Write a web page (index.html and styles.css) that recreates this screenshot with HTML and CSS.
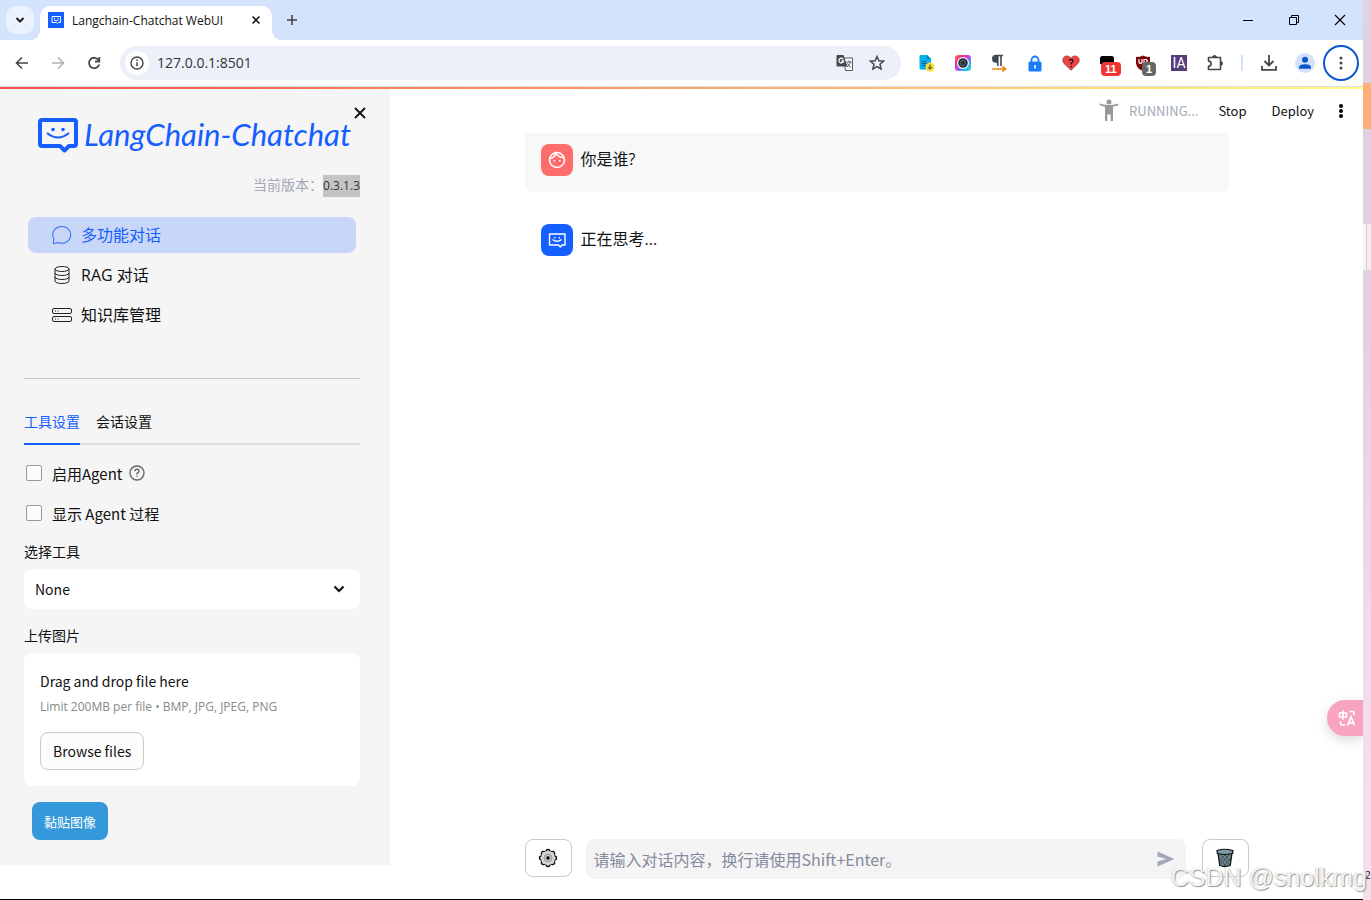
FILE: index.html
```html
<!DOCTYPE html>
<html lang="zh-CN">
<head>
    <meta charset="UTF-8">
    <meta name="viewport" content="width=device-width, initial-scale=1.0">
    <title>Langchain-Chatchat WebUI</title>
    <link rel="stylesheet" href="styles.css">
</head>
<body>

    <div class="browser">
        <div class="tab-strip">
            <button class="tab-search" aria-label="Search tabs">
                <svg width="10" height="10" viewBox="0 0 10 10"><path d="M1.5 3l3.5 3.5L8.500 3" fill="none" stroke="#1f2023" stroke-width="2"/></svg>
            </button>
            <div class="tab">
                <svg class="favicon" width="16" height="16" viewBox="0 0 16 16">
                    <rect width="16" height="16" fill="#155eff"/>
                    <path d="M4 4.500h8.500v6h-2l-1 1-1-1H4z" fill="none" stroke="#fff"/>
                    <path d="M6 8q2.200 1.500 4.500 0" fill="none" stroke="#fff"/>
                    <path d="M6 6.500h1M9.500 6.500h1" stroke="#fff"/>
                </svg>
                <span class="tab-title">Langchain-Chatchat WebUI</span>
                <button class="tab-close" aria-label="Close tab">
                    <svg width="10" height="10" viewBox="0 0 10 10"><path d="M1.500 1.500l7 7M8.500 1.500l-7 7" stroke="#1f2023" stroke-width="1.600"/></svg>
                </button>
            </div>
            <button class="new-tab" aria-label="New tab">
                <svg width="12" height="12" viewBox="0 0 12 12"><path d="M6 1v10M1 6h10" stroke="#41444a" stroke-width="1.600"/></svg>
            </button>
            <div class="window-buttons">
                <button aria-label="Minimize"><svg width="12" height="12" viewBox="0 0 12 12"><path d="M1 6.500h10" stroke="#000"/></svg></button>
                <button aria-label="Restore"><svg width="12" height="12" viewBox="0 0 12 12"><path d="M1.500 3.500h7v7h-7zM3.500 3V1.500h7v7H9" fill="none" stroke="#000"/></svg></button>
                <button aria-label="Close"><svg width="12" height="12" viewBox="0 0 12 12"><path d="M1 1l10 10M11 1L1 11" stroke="#000" stroke-width="1.100"/></svg></button>
            </div>
        </div>

        <div class="toolbar">
            <button class="tool" aria-label="Back"><svg width="14" height="14" viewBox="0 0 14 14"><path d="M13 7H2M7 1.500L1.500 7 7 12.500" fill="none" stroke="#45474b" stroke-width="1.600"/></svg></button>
            <button class="tool" aria-label="Forward"><svg width="14" height="14" viewBox="0 0 14 14"><path d="M1 7h11M7 1.500L12.500 7 7 12.500" fill="none" stroke="#b0b1b3" stroke-width="1.600"/></svg></button>
            <button class="tool" aria-label="Reload"><svg width="14" height="14" viewBox="0 0 14 14"><path d="M11.500 4A5.200 5.200 0 1 0 12.200 8.500M12.300 1v4.500H8" fill="none" stroke="#45474b" stroke-width="1.800"/></svg></button>
            <div class="omnibox">
                <button class="site-info" aria-label="Site information"><svg width="14" height="14" viewBox="0 0 14 14"><circle cx="7" cy="7" r="6" fill="none" stroke="#45474b" stroke-width="1.400"/><path d="M7 6.200v4M7 3.500v1.500" stroke="#45474b" stroke-width="1.500"/></svg></button>
                <input class="url" type="text" value="127.0.0.1:8501" aria-label="Address">
                <button class="omni-icon" aria-label="Translate page">
                    <svg width="18" height="18" viewBox="0 0 18 18">
                        <path d="M7.500 4h9v12.500H9.500z" fill="#fff" stroke="#55575b"/>
                        <path d="M1.500 1h6l4 11.500h-10a1 1 0 0 1-1-1V2a1 1 0 0 1 1-1z" fill="#45474b"/>
                        <path d="M7.200 5.300A2.300 2.300 0 1 0 7.500 7H5.500" fill="none" stroke="#fff" stroke-width="1.300"/>
                        <path d="M10.500 8h5M13 6.500V8M14.500 8q-.5 3-3.500 5M11.500 9.500q1 2.500 3.500 4" fill="none" stroke="#55575b"/>
                    </svg>
                </button>
                <button class="omni-icon" aria-label="Bookmark">
                    <svg width="16" height="16" viewBox="0 0 16 16"><path d="M8 1.500l1.900 4.300 4.700.4-3.600 3.100 1.100 4.600L8 11.500l-4.100 2.400L5 9.300 1.400 6.200l4.700-.4z" fill="none" stroke="#45474b" stroke-width="1.500"/></svg>
                </button>
            </div>
            <button class="tool" aria-label="Document download">
                <svg width="18" height="18" viewBox="0 0 18 18"><path d="M2 1h7l4 4v10.500H3a1.500 1.500 0 0 1-1.500-1.500V2z" fill="#02b0ec"/><path d="M9 1v4h4z" fill="#087cc0"/><path d="M4 7.500h4M4 9.500h6M4 11.500h4" stroke="#125b8b"/><circle cx="12" cy="13" r="4.500" fill="#fddb3a"/><path d="M12 10.500v4.500M10 13.200l2 2 2-2" fill="none" stroke="#333"/></svg>
            </button>
            <button class="tool" aria-label="Camera">
                <svg width="16" height="16" viewBox="0 0 16 16">
                    <defs><linearGradient id="cam" x1="0" y1="0" x2="1" y2="1"><stop offset="0" stop-color="#ff8a1e"/><stop offset=".25" stop-color="#f22c8f"/><stop offset=".5" stop-color="#c048ee"/><stop offset=".75" stop-color="#20b8ff"/><stop offset="1" stop-color="#45e0a0"/></linearGradient></defs>
                    <rect width="16" height="16" rx="3" fill="url(#cam)"/><circle cx="8" cy="8" r="6" fill="#fff"/><circle cx="8" cy="8" r="4.800" fill="#28333c"/><circle cx="8" cy="8" r="2.600" fill="none" stroke="#54616b"/>
                </svg>
            </button>
            <button class="tool" aria-label="Paragraph marks">
                <svg width="16" height="18" viewBox="0 0 16 18"><path d="M12 1.500H5a3.200 3.200 0 0 0 0 6.400h1M6.800 1.500V12M10 1.500V12" fill="none" stroke="#3b4a55" stroke-width="1.600"/><path d="M5 2a3 3 0 0 0 0 6h1.500V2z" fill="#3b4a55"/><path d="M1 15h12M11.500 12.500l3 2.500-3 2.500" fill="none" stroke="#f58613" stroke-width="1.700"/></svg>
            </button>
            <button class="tool" aria-label="Password lock">
                <svg width="14" height="17" viewBox="0 0 14 17"><path d="M3.500 8V5a3.500 3.500 0 0 1 7 0v3" fill="none" stroke="#177cff" stroke-width="1.800"/><rect x=".5" y="6.500" width="13" height="10" rx="1.500" fill="#177cff"/><path d="M7 10v3.500" stroke="#fff" stroke-width="1.600"/></svg>
            </button>
            <button class="tool" aria-label="Heart">
                <svg width="18" height="16" viewBox="0 0 18 16"><path d="M9 15.300L2 8.500C-.5 5.500 1 1 5 1c2 0 3.200 1 4 2.300C9.800 2 11 1 13 1c4 0 5.500 4.500 3 7.500z" fill="#f04343" stroke="#943434" stroke-width=".7"/><path d="M7.300 5.800Q7.500 4.300 9.200 4.300 11 4.300 11 5.900 11 7 9.200 8.200V9.500M9.200 11v1.400" fill="none" stroke="#161616" stroke-width="1.300"/></svg>
            </button>
            <button class="tool" aria-label="Tab manager">
                <svg width="16" height="16" viewBox="0 0 16 16"><path d="M1 3.500A2.500 2.500 0 0 1 3.500 1h9A2.500 2.500 0 0 1 15 3.500V9H5v2H3V9H1z" fill="#000"/></svg>
                <span class="badge badge-red">11</span>
            </button>
            <button class="tool" aria-label="Content blocker">
                <svg width="16" height="16" viewBox="0 0 16 16"><path d="M8 .5q3 1.500 7 1.500v6q0 5-7 8-7-3-7-8V2q4 0 7-1.500z" fill="#7c0406"/><path d="M4 4v3.500q1.500 1.800 3 0V4M9 9V4.500h2.500q1.500 1.500 0 3H9" fill="none" stroke="#fff" stroke-width="1.200"/></svg>
                <span class="badge badge-gray">1</span>
            </button>
            <button class="tool" aria-label="IA"><span class="ia">IA</span></button>
            <button class="tool" aria-label="Extensions">
                <svg width="18" height="18" viewBox="0 0 18 18"><path d="M2.500 3.500h12v12h-12v-3.200a2.500 2.500 0 0 0 0-5.200z" fill="none" stroke="#45474b" stroke-width="1.600" stroke-linejoin="round"/><path d="M6.500 3.500a2 2 0 0 1 4 0M14.500 7.500a2 2 0 0 1 0 4" fill="#45474b" stroke="#45474b"/></svg>
            </button>
            <span class="separator"></span>
            <button class="tool" aria-label="Downloads">
                <svg width="16" height="16" viewBox="0 0 16 16"><path d="M8 0v10M3.500 6L8 10.500 12.500 6M1 11v3.800h14V11" fill="none" stroke="#45474b" stroke-width="1.800"/></svg>
            </button>
            <button class="tool" aria-label="Profile">
                <svg width="20" height="20" viewBox="0 0 20 20"><circle cx="10" cy="10" r="10" fill="#d3e3fd"/><circle cx="10" cy="6.800" r="3" fill="#0b57d0"/><path d="M4 15.800v-1.500Q4 11.300 10 11.300t6 3v1.500z" fill="#0b57d0"/></svg>
            </button>
            <button class="tool ringed" aria-label="Browser menu">
                <svg width="4" height="16" viewBox="0 0 4 16"><g fill="#45474b"><circle cx="2" cy="3" r="1.500"/><circle cx="2" cy="8" r="1.500"/><circle cx="2" cy="13" r="1.500"/></g></svg>
            </button>
        </div>

        <div class="decoration"></div>

        <div class="app">
            <aside class="sidebar">
                <button class="sidebar-close" aria-label="Close sidebar">
                    <svg width="12" height="12" viewBox="0 0 12 12"><path d="M1 1l10 10M11 1L1 11" stroke="#111" stroke-width="1.800"/></svg>
                </button>
                <div class="logo">
                    <svg width="40" height="36" viewBox="0 0 40 36">
                        <path d="M4 3h32q2 0 2 2v22q0 2-2 2h-5l-4.500 4.500L22 29H4q-2 0-2-2V5q0-2 2-2z" fill="none" stroke="#155eff" stroke-width="4" stroke-linejoin="round"/>
                        <path d="M9 16q11 9 22 0" fill="none" stroke="#155eff" stroke-width="2"/>
                        <circle cx="15" cy="12.500" r="1.800" fill="#155eff"/><circle cx="25" cy="12.500" r="1.800" fill="#155eff"/>
                    </svg>
                    <span>LangChain-Chatchat</span>
                </div>
                <p class="version">当前版本：<mark>0.3.1.3</mark></p>

                <nav class="menu">
                    <a class="active" href="#">
                        <svg width="20" height="20" viewBox="0 0 20 20"><path d="M1.300 18.700l.6-4.700A9 8.400 0 1 1 6 17.500z" fill="none" stroke="#3c70f6" stroke-width="1.100" stroke-linejoin="round"/></svg>
                        <span>多功能对话</span>
                    </a>
                    <a href="#">
                        <svg width="20" height="20" viewBox="0 0 20 20" fill="none" stroke="#222"><ellipse cx="10" cy="4" rx="7" ry="2.500"/><path d="M3 4v12c0 3.300 14 3.300 14 0V4M3 8c0 3.300 14 3.300 14 0M3 12c0 3.300 14 3.300 14 0"/></svg>
                        <span>RAG 对话</span>
                    </a>
                    <a href="#">
                        <svg width="20" height="20" viewBox="0 0 20 20" fill="none" stroke="#222"><rect x=".5" y="3.500" width="19" height="5" rx="1.500"/><rect x=".5" y="11.500" width="19" height="5" rx="1.500"/><path d="M3 6h1M5.500 6h1M3 14h1M5.500 14h1"/></svg>
                        <span>知识库管理</span>
                    </a>
                </nav>

                <hr>

                <div class="tabs" role="tablist">
                    <button class="selected" role="tab" aria-selected="true">工具设置</button>
                    <button role="tab" aria-selected="false">会话设置</button>
                </div>

                <div class="check-row">
                    <input type="checkbox" id="useAgent">
                    <label for="useAgent">启用Agent</label>
                    <svg width="16" height="16" viewBox="0 0 16 16" fill="none" stroke="#666" stroke-width="1.400"><circle cx="8" cy="8" r="7"/><path d="M5.900 6.300Q6 4.300 8 4.300t2.100 1.900Q10.100 7.200 8 8.400v1.100M8 10.700v1.400"/></svg>
                </div>
                <div class="check-row">
                    <input type="checkbox" id="showAgent">
                    <label for="showAgent">显示 Agent 过程</label>
                </div>

                <label class="field-label" for="tool">选择工具</label>
                <div class="select-wrap">
                    <select id="tool">
                        <option>None</option>
                    </select>
                    <svg width="12" height="8" viewBox="0 0 12 8"><path d="M1.500 1.500L6 6l4.500-4.500" fill="none" stroke="#111" stroke-width="2.200"/></svg>
                </div>

                <span class="field-label">上传图片</span>
                <div class="uploader">
                    <p class="drag">Drag and drop file here</p>
                    <p class="limit">Limit 200MB per file • BMP, JPG, JPEG, PNG</p>
                    <button class="btn">Browse files</button>
                </div>
                <button class="paste-btn">黏贴图像</button>
            </aside>

            <main class="main">
                <header class="app-header">
                    <svg width="20" height="24" viewBox="0 0 20 24" fill="#999"><circle cx="10" cy="3" r="2.500"/><path d="M.5 6.200l.4-1.700Q10 7.500 19.100 4.500l.4 1.700-5.500 1.600V22h-2.300v-6.500H8.300V22H6V7.800z"/></svg>
                    <span class="running">RUNNING...</span>
                    <button>Stop</button>
                    <button>Deploy</button>
                    <button class="more" aria-label="Main menu">
                        <svg width="4" height="16" viewBox="0 0 4 16"><circle cx="2" cy="3" r="2"/><circle cx="2" cy="8" r="2"/><circle cx="2" cy="13" r="2"/></svg>
                    </button>
                </header>

                <section class="chat">
                    <div class="message user">
                        <span class="avatar">
                            <svg width="20" height="20" viewBox="0 0 20 20" fill="none" stroke="#fff" stroke-width="1.600"><circle cx="10" cy="10" r="7.500"/><path d="M3 8.500Q7.500 8 9 3q2.500 4.800 8 4.500"/><path d="M6.500 10.800h1.600M12 10.800h1.600"/></svg>
                        </span>
                        <p>你是谁?</p>
                    </div>
                    <div class="message">
                        <span class="avatar">
                            <svg width="20" height="20" viewBox="0 0 20 20" fill="none" stroke="#fff" stroke-width="1.400"><path d="M2.500 4h15.500v11h-3l-1.700 2-1.800-2h-9z" stroke-linejoin="round"/><path d="M5.500 9.500q4.500 3.500 9 0"/><path d="M7.300 7.700h1.200M11.800 7.700H13"/></svg>
                        </span>
                        <p>正在思考...</p>
                    </div>
                </section>

                <form class="composer">
                    <button class="btn" type="button" aria-label="Settings">
                        <svg width="20" height="20" viewBox="0 0 20 20">
                            <g fill="#d4d4d4" stroke="#111" stroke-width="1.400"><circle cx="10" cy="3.500" r="2"/><circle cx="14.600" cy="5.400" r="2"/><circle cx="16.500" cy="10" r="2"/><circle cx="14.600" cy="14.600" r="2"/><circle cx="10" cy="16.500" r="2"/><circle cx="5.400" cy="14.600" r="2"/><circle cx="3.500" cy="10" r="2"/><circle cx="5.400" cy="5.400" r="2"/></g>
                            <circle cx="10" cy="10" r="7" fill="#d8d8d8"/><circle cx="10" cy="10" r="4" fill="#c4c4c4" stroke="#999"/><circle cx="10" cy="10" r="1.800" fill="#000"/>
                        </svg>
                    </button>
                    <div class="prompt">
                        <input type="text" placeholder="请输入对话内容，换行请使用Shift+Enter。" aria-label="对话内容">
                        <button type="button" aria-label="Send">
                            <svg width="18" height="16" viewBox="0 0 18 16"><path d="M.5.5L17.500 8 .5 15.500v-5L9 8 .5 5.500z" fill="#a3a8b8"/></svg>
                        </button>
                    </div>
                    <button class="btn" type="button" aria-label="Clear">
                        <svg width="18" height="20" viewBox="0 0 18 20"><path d="M2 5l1.800 12.500Q9 19.500 14.200 17.500L16 5z" fill="#6f858c" stroke="#111" stroke-width="1.300"/><path d="M4 6l9.500 11M8 6l6 7M4 11l6 7M14 6L4.500 16M10 6l-6 6M15 10l-7 8" stroke="#30444b" stroke-width=".7"/><path d="M1 2.500Q9 0 17 2.500l-.4 3Q9 7.500 1.400 5.500z" fill="#7f979e" stroke="#111" stroke-width="1.200"/></svg>
                    </button>
                </form>
            </main>
        </div>

        <button class="translate-bubble" aria-label="Translate">
            <svg width="18" height="18" viewBox="0 0 18 18" fill="none" stroke="#fff" stroke-width="1.700"><path d="M1.500 4h7v4h-7zM5 1.500v9M11.500 2.500h3q1.500 0 1.500 2V6M2.500 12.500v2q0 1.500 1.500 1.500h3M9.500 16.500L13 8l3.500 8.500M10.700 14h4.600"/></svg>
        </button>
    </div>

    <div class="desktop">
        <span class="orange"></span>
        <span class="mauve"></span>
        <span class="pale"></span>
        <span class="edge-text">2</span>
    </div>

    <div class="watermark">CSDN @snolkmg</div>

</body>
</html>
```
FILE: styles.css
```css
* {
    box-sizing: border-box;
}
body {
    margin: 0;
    display: flex;
    min-height: 100vh;
    position: relative;
    overflow: hidden;
    font-family: "Open Sans", "Noto Sans CJK SC", sans-serif;
    font-size: 16px;
    color: #111;
    background-color: white;
}
p {
    margin: 0;
}
button, input, select {
    font: inherit;
    color: inherit;
    border: none;
    background: none;
    padding: 0;
    margin: 0;
}
button {
    display: flex;
    align-items: center;
    justify-content: center;
    cursor: pointer;
}
svg {
    flex: none;
}

/* browser window */
.browser {
    flex: 1;
    min-width: 0;
    display: flex;
    flex-direction: column;
    position: relative;
    overflow: hidden;
    border-bottom: 1px solid black;
}
.tab-strip {
    display: flex;
    height: 40px;
    background-color: #d3e3fd;
}
.tab-search {
    width: 28px;
    height: 28px;
    margin: 6px;
    border-radius: 10px;
    background-color: #ebf1fd;
}
.tab {
    display: flex;
    align-items: center;
    width: 232px;
    margin-top: 6px;
    padding: 0 8px 6px;
    gap: 8px;
    border-radius: 10px 10px 0 0;
    background-color: white;
    position: relative;
}
.tab::before, .tab::after {
    content: "";
    position: absolute;
    bottom: 0;
    width: 10px;
    height: 10px;
}
.tab::before {
    left: -10px;
    background: radial-gradient(circle at 0 0, transparent 10px, white 10px);
}
.tab::after {
    right: -10px;
    background: radial-gradient(circle at 100% 0, transparent 10px, white 10px);
}
.tab-title {
    flex: 1;
    font-size: 12px;
    white-space: nowrap;
}
.tab-close {
    width: 16px;
    height: 16px;
}
.new-tab {
    width: 28px;
    margin-left: 6px;
}
.window-buttons {
    display: flex;
    margin-left: auto;
}
.window-buttons button {
    width: 46px;
}
.toolbar {
    display: flex;
    align-items: center;
    height: 47px;
    padding: 0 4px;
    background-color: white;
    border-bottom: 1px solid #dbe0e8;
}
.tool {
    width: 36px;
    height: 36px;
    flex: none;
    position: relative;
}
.omnibox {
    flex: 1;
    display: flex;
    align-items: center;
    height: 34px;
    margin: 0 8px;
    padding: 0 8px 0 5px;
    border-radius: 17px;
    background-color: #ecf0f9;
}
.site-info {
    width: 24px;
    height: 24px;
    border-radius: 50%;
    background-color: white;
}
.url {
    flex: 1;
    min-width: 0;
    margin-left: 8px;
    padding-bottom: 2px;
    font-size: 14px;
    color: #333;
}
.omni-icon {
    width: 32px;
    height: 32px;
}
.badge {
    position: absolute;
    left: 12px;
    top: 17px;
    padding: 0 4px;
    border-radius: 4px;
    font-family: "Liberation Sans", sans-serif;
    font-size: 11px;
    line-height: 14px;
    font-weight: bold;
    color: white;
}
.badge-red {
    background-color: #f03434;
}
.badge-gray {
    left: 17px;
    background-color: #666;
}
.ia {
    width: 16px;
    background-color: #563d7c;
    color: white;
    font-family: Roboto, sans-serif;
    font-size: 14px;
    line-height: 16px;
}
.separator {
    width: 2px;
    height: 16px;
    margin: 0 8px;
    background-color: #d3e3fd;
}
.ringed {
    border: 2px solid #0b57d0;
    border-radius: 50%;
}
.decoration {
    height: 2px;
    background: linear-gradient(90deg, #ff4b4b, #fffd80);
}

/* app */
.app {
    flex: 1;
    display: flex;
    align-items: flex-start;
}
.sidebar {
    width: 390px;
    flex: none;
    padding: 24px 30px 25px 24px;
    background-color: #f5f5f5;
    position: relative;
}
.sidebar-close {
    position: absolute;
    top: 14px;
    right: 20px;
    width: 20px;
    height: 20px;
}
.logo {
    display: flex;
    align-items: center;
    gap: 6px;
    height: 44px;
    padding-left: 14px;
    font-family: Lato, sans-serif;
    font-style: italic;
    font-size: 31px;
    color: #155eff;
    white-space: nowrap;
}
.logo span {
    padding-bottom: 2px;
}
.version {
    margin-top: 17px;
    text-align: right;
    font-size: 14px;
    line-height: 22px;
    color: #a3a8b4;
}
.version mark {
    display: inline-block;
    font-size: 12px;
    background-color: #c4c4c4;
    color: #333;
}
.menu {
    display: flex;
    flex-direction: column;
    gap: 4px;
    margin: 20px 4px 0;
}
.menu a {
    display: flex;
    align-items: center;
    gap: 9px;
    height: 36px;
    padding-left: 24px;
    border-radius: 8px;
    color: #111;
    text-decoration: none;
}
.menu span {
    padding-bottom: 2px;
}
.menu a.active {
    background-color: #c8d6f8;
    color: #155eff;
}
hr {
    margin: 45px 0 23px;
    border: none;
    border-top: 1px solid #c4c4c4;
}
.tabs {
    display: flex;
    gap: 16px;
    height: 43px;
    box-shadow: inset 0 -2px #dcdcdc;
    font-size: 14px;
}
.tabs button {
    padding-bottom: 6px;
}
.tabs .selected {
    color: #155eff;
    box-shadow: inset 0 -2px #155eff;
}
.check-row {
    display: flex;
    align-items: center;
    height: 24px;
    margin-top: 16px;
    padding-left: 2px;
    font-family: "Noto Sans CJK SC", sans-serif;
    font-size: 15px;
}
.check-row input {
    appearance: none;
    width: 16px;
    height: 16px;
    margin-right: 10px;
    border: 1px solid #999;
    border-radius: 2px;
    background-color: #fcfcfc;
}
.check-row svg {
    margin-left: 7px;
}
.field-label {
    display: block;
    margin-top: 17px;
    font-size: 14px;
    line-height: 20px;
}
.select-wrap {
    display: flex;
    align-items: center;
    margin-top: 7px;
    padding-right: 15px;
    border-radius: 8px;
    background-color: white;
}
.select-wrap select {
    appearance: none;
    flex: 1;
    height: 40px;
    padding-left: 11px;
    font-family: "Noto Sans CJK SC", sans-serif;
    font-size: 14px;
}
.uploader {
    margin-top: 7px;
    padding: 15px 16px 16px;
    border-radius: 8px;
    background-color: white;
    font-family: "Noto Sans CJK SC", sans-serif;
    font-size: 14px;
}
.drag {
    line-height: 26px;
}
.limit {
    font-family: "Open Sans", sans-serif;
    font-size: 12px;
    line-height: 26px;
    color: #888;
}
.btn {
    height: 38px;
    padding: 0 12px;
    border: 1px solid #c9c9c9;
    border-radius: 8px;
    background-color: #fcfcfc;
}
.uploader .btn {
    margin-top: 12px;
}
.paste-btn {
    height: 38px;
    margin: 16px 8px 0;
    padding: 0 12px;
    border-radius: 8px;
    background-color: #3498db;
    color: white;
    font-size: 13px;
}

/* chat area */
.main {
    flex: 1;
    align-self: stretch;
    display: flex;
    flex-direction: column;
    min-width: 0;
}
.app-header {
    display: flex;
    align-items: center;
    justify-content: flex-end;
    height: 44px;
    padding-right: 20px;
    font-family: "Noto Sans CJK SC", sans-serif;
    font-size: 13px;
}
.running {
    margin-left: 10px;
    margin-right: 20px;
    padding-bottom: 2px;
    color: #a3a8b4;
}
.app-header button {
    margin-right: 25px;
    padding-bottom: 2px;
}
.app-header .more {
    margin-right: 0;
    padding-bottom: 0;
}
.chat {
    width: 100%;
    max-width: 704px;
    margin: 0 auto;
    display: flex;
    flex-direction: column;
    gap: 21px;
}
.message {
    display: flex;
    gap: 8px;
    padding: 11px 16px 16px;
    line-height: 30px;
}
.message.user {
    border-radius: 2px 2px 8px 8px;
    background-color: #f7f8fa;
}
.avatar {
    display: flex;
    align-items: center;
    justify-content: center;
    width: 32px;
    height: 32px;
    border-radius: 8px;
    background-color: #155eff;
}
.user .avatar {
    background-color: #ff6c6c;
}
.composer {
    width: 100%;
    max-width: 744px;
    display: flex;
    align-items: flex-start;
    margin: auto auto 0;
    padding: 0 0 20px 20px;
}
.composer .btn {
    width: 47px;
    background-color: white;
}
.prompt {
    flex: 1;
    display: flex;
    height: 40px;
    margin: 0 16px 0 14px;
    padding: 0 11px 0 8px;
    border-radius: 8px;
    background-color: #f4f4f4;
}
.prompt input {
    flex: 1;
    min-width: 0;
    font-family: "Noto Sans CJK SC", sans-serif;
}
.prompt input::placeholder {
    color: #858a9c;
}
.translate-bubble {
    position: absolute;
    right: 0;
    top: 700px;
    width: 36px;
    height: 36px;
    padding-left: 4px;
    border-radius: 18px 0 0 18px;
    background-color: #f8a3c1;
    box-shadow: 0 4px 12px rgba(0, 0, 0, 0.15);
}

/* desktop seen behind the window */
.desktop {
    width: 8px;
    padding-top: 83px;
    display: flex;
    flex-direction: column;
    background: linear-gradient(#dfd2e2 0, #e3cfe0 300px, #f1dded 700px, #f3dfee 100%);
}
.orange {
    height: 46px;
    background-color: #fbb07c;
}
.mauve {
    height: 95px;
    background-color: #e2cfe0;
}
.pale {
    height: 46px;
    border-left: 3px solid #f8f2f8;
    background-color: #f4ecf4;
    box-shadow: inset 1px 0 #d8ccd8;
}
.edge-text {
    margin: auto 0 16px;
    padding-left: 2px;
    font-size: 10px;
    line-height: 18px;
}
.watermark {
    position: absolute;
    right: 4px;
    bottom: 8px;
    font-family: "Liberation Sans", sans-serif;
    font-size: 25px;
    line-height: 30px;
    color: rgba(255, 255, 255, 0.85);
    text-shadow: 1px 1px 1px #999, -1px 0 1px #ddd;
    pointer-events: none;
}
```
